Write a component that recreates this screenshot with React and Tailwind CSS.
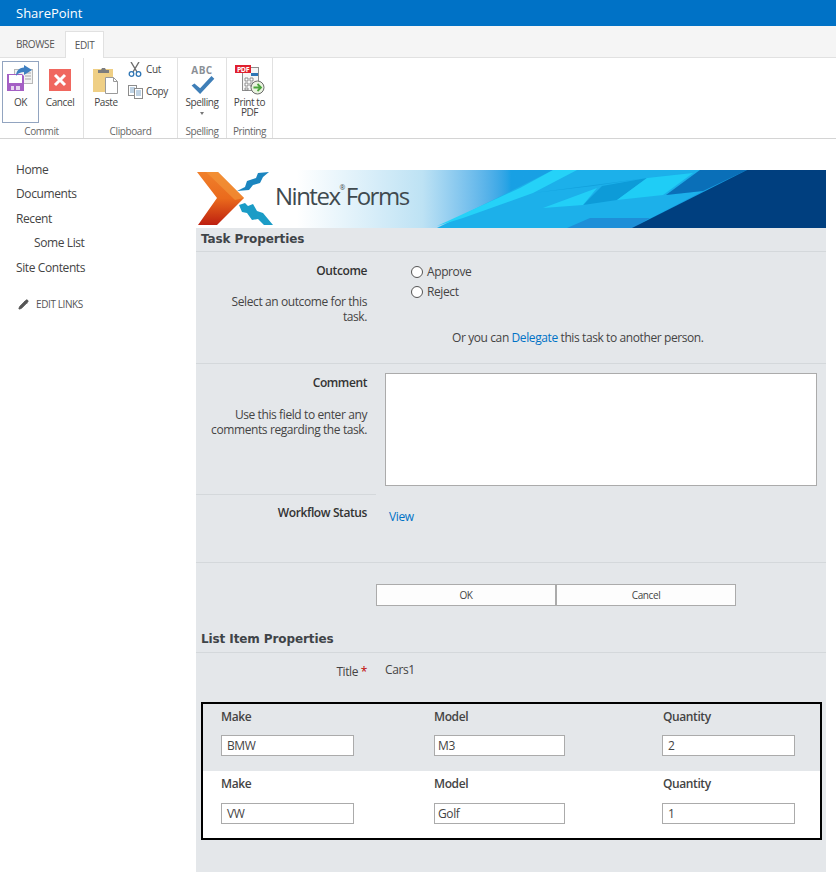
import { Pencil } from "lucide-react";

const font = { fontFamily: '"Open Sans", "Noto Sans", sans-serif' };

const navLinks = [
  { label: "Home", className: "h-[24px] pl-4" },
  { label: "Documents", className: "h-[25px] pl-4" },
  { label: "Recent", className: "h-[24px] pl-4" },
  { label: "Some List", className: "h-[25px] pl-[34px]" },
  { label: "Site Contents", className: "h-[24px] pl-4" },
];

function SaveIcon() {
  return (
    <svg width="28" height="28" viewBox="0 0 28 28">
      <rect x="7.5" y="4.5" width="18" height="14" fill="#f2f2f2" stroke="#b8b8b8" />
      <path d="M18 8h6M18 11h6M18 14h6" stroke="#a5a5a5" />
      <path d="M0 9h15l2 2v15H0z" fill="#a45fc4" />
      <rect x="2" y="10" width="13" height="8" fill="#fff" />
      <rect x="4" y="21" width="9" height="4" fill="#e6d6ee" />
      <rect x="7" y="21" width="2" height="4" fill="#a45fc4" />
      <path d="M17 0l8 5-8 5V7c-3 0-6 1-8 4 0-5 3-8 8-8.5z" fill="#3e7fc1" />
    </svg>
  );
}

function CancelIcon() {
  return (
    <svg width="22" height="22" viewBox="0 0 22 22">
      <rect width="22" height="22" fill="#f0675f" />
      <path d="M6 6l10 10M16 6L6 16" stroke="#fff" strokeWidth="3" />
    </svg>
  );
}

function PasteIcon() {
  return (
    <svg width="26" height="27" viewBox="0 0 26 27">
      <rect x="0" y="2" width="20" height="23" fill="#efcf85" />
      <path d="M5 6V3h3l1-2h3l1 2h3v3z" fill="#7d7d7d" />
      <path d="M12.5 10.5h8l4 4v12h-12z" fill="#fff" stroke="#9a9a9a" />
      <path d="M20.5 10.5v4h4" fill="none" stroke="#9a9a9a" />
    </svg>
  );
}

function CutIcon() {
  return (
    <svg width="14" height="15" viewBox="0 0 14 15">
      <path d="M3 0l6 10M11 0L5 10" stroke="#6d6d6d" strokeWidth="1.4" />
      <circle cx="3.5" cy="12" r="2.3" fill="none" stroke="#2f76b5" strokeWidth="1.3" />
      <circle cx="10.5" cy="12" r="2.3" fill="none" stroke="#2f76b5" strokeWidth="1.3" />
    </svg>
  );
}

function CopyIcon() {
  return (
    <svg width="15" height="14" viewBox="0 0 15 14">
      <rect x="0.5" y="0.5" width="8" height="10" fill="#fff" stroke="#8c8c8c" />
      <path d="M2 3h5M2 5h5M2 7h5" stroke="#7fa6c9" />
      <rect x="6.5" y="3.5" width="8" height="10" fill="#fff" stroke="#8c8c8c" />
      <path d="M8 6h5M8 8h5M8 10h5" stroke="#7fa6c9" />
    </svg>
  );
}

function SpellIcon() {
  return (
    <svg width="28" height="18" viewBox="0 0 28 19">
      <path d="M3 10l3-2 6 5L24 0l3 3-15 16z" fill="#3f7fb8" />
    </svg>
  );
}

function PdfIcon() {
  return (
    <svg width="30" height="30" viewBox="0 0 30 30">
      <rect x="7.5" y="2.5" width="16" height="23" fill="#f6f6f6" stroke="#8d8d8d" />
      <rect x="16" y="8" width="7" height="3" fill="#2f76b5" />
      <path d="M10 13h3v3h-3zM15 13h3v3h-3zM10 18h3v3h-3zM15 18h3v3h-3zM10 23h3v2h-3z" fill="#fff" stroke="#777" strokeWidth="0.8" />
      <rect x="0" y="0" width="16" height="8" fill="#e0202f" />
      <text x="8" y="6.6" textAnchor="middle" fontSize="7" fontWeight="700" fill="#fff">PDF</text>
      <circle cx="22.5" cy="22.5" r="6.5" fill="#e9f3df" stroke="#6b6b6b" />
      <path d="M18.5 22.5h7M22.5 19l3.5 3.5-3.5 3.5" fill="none" stroke="#4aa53c" strokeWidth="1.8" />
    </svg>
  );
}

function Banner() {
  return (
    <div className="relative h-[58px] overflow-hidden bg-gradient-to-r from-white from-[16%] via-[#bde2f4] via-[36%] to-[#18a0e4] to-[50%]">
      <svg className="absolute inset-0" width="630" height="58" viewBox="0 0 630 58">
        <defs>
          <linearGradient id="chev" x1="0" y1="0" x2="0" y2="1">
            <stop offset="0" stopColor="#f0802c" />
            <stop offset="0.5" stopColor="#ea6a1c" />
            <stop offset="1" stopColor="#bd1f10" />
          </linearGradient>
        </defs>
        <path d="M241 58L357 0H504L470 25l37-4-71 37z" fill="#1cb0ea" />
        <path d="M241 56L324 18 357 0H381L337 23 267 48z" fill="#25d2f8" />
        <path d="M337 23L497 2 451 8 397 16z" fill="#12a0dc" />
        <path d="M387 35l19-19 45-8-30 22z" fill="#0d9bd8" />
        <path d="M421 30l30-22 46-5-30 22z" fill="#1fcdf6" />
        <path d="M347 38l54-20-14 17z" fill="#22cff7" />
        <path d="M371 58l23-10h60l-17 10z" fill="#1e8fd8" />
        <path d="M504 0h47l-44 21-37 4z" fill="#0a6fb8" />
        <path d="M436 58L551 0H630V58z" fill="#003f7f" />
        <path d="M1 2h21l26 26-27 27H2l19-27z" fill="url(#chev)" />
        <path d="M10 2h12l26 26-9 2z" fill="#f39a3c" opacity="0.6" />
        <path d="M41 21l8-4 2-6 9-3 2-5 11-1-6 5-3 6-7 2-4 5z" fill="#1b85bf" />
        <path d="M43 35l6-2 3 3 5-2 4 7 6 2 10 12H68l-6-6-6 1-5-7-5-1z" fill="#1b9cc6" />
      </svg>
      <div className="absolute left-[79px] top-[8px] flex items-start text-[#3f4a4f] text-[24px] leading-[36px] tracking-[-1.5px]">
        Nintex<span className="text-[7px] leading-[20px] mr-[2px]">®</span>Forms
      </div>
    </div>
  );
}

function TableRow({ make, model, quantity, className, inputGap }) {
  return (
    <div className={className}>
      <div className="flex pl-[18px] h-[26px] items-center text-[12px] font-semibold text-[#444]">
        <div className="w-[213px]">Make</div>
        <div className="w-[229px]">Model</div>
        <div>Quantity</div>
      </div>
      <div className={`flex pl-[18px] ${inputGap} text-[12px] text-[#444]`}>
        <div className="w-[133px] h-[21px] mr-[80px] bg-white border border-[#ababab] pl-[5px] leading-[20px]">{make}</div>
        <div className="w-[131px] h-[21px] mr-[97px] bg-white border border-[#ababab] pl-[3px] leading-[20px]">{model}</div>
        <div className="w-[133px] h-[21px] bg-white border border-[#ababab] pl-[5px] leading-[20px]">{quantity}</div>
      </div>
    </div>
  );
}

export default function App() {
  return (
    <div className="w-[836px] h-[872px] overflow-hidden bg-white text-[#444] tracking-[-0.4px]" style={font}>
      <div className="h-[26px] bg-[#0072c6] pl-4 text-white text-[13px] leading-[26px] tracking-normal">SharePoint</div>

      <div className="h-[32px] bg-[#f5f5f5] border-b border-[#e1e1e1] flex items-end text-[10px] text-[#555]">
        <div className="pl-4 pr-3 h-[26px] leading-[26px] w-[65px]">BROWSE</div>
        <div className="w-[39px] h-[27px] -mb-px bg-white border border-b-0 border-[#e1e1e1] text-center leading-[26px]">EDIT</div>
      </div>

      <div className="h-[81px] border-b border-[#d4d4d4] flex text-[10px] text-[#444]">
        <div className="w-[84px] border-r border-[#e1e1e1] flex flex-col">
          <div className="flex pt-[3px] pl-[2px] flex-1">
            <div className="w-[37px] h-[62px] border border-[#92a4c0] flex flex-col items-center pt-[3px]">
              <SaveIcon />
              <div className="mt-[3px] leading-[12px]">OK</div>
            </div>
            <div className="w-[42px] flex flex-col items-center pt-[8px]">
              <CancelIcon />
              <div className="mt-[5px] leading-[12px]">Cancel</div>
            </div>
          </div>
          <div className="h-[15px] text-center leading-[16px] text-[#666]">Commit</div>
        </div>

        <div className="w-[94px] border-r border-[#e1e1e1] flex flex-col">
          <div className="flex flex-1">
            <div className="w-[44px] flex flex-col items-center pt-[9px]">
              <PasteIcon />
              <div className="mt-[2px] leading-[12px]">Paste</div>
            </div>
            <div className="flex flex-col pt-[4px] gap-[7px]">
              <div className="flex items-center gap-[4px] h-[15px]"><CutIcon />Cut</div>
              <div className="flex items-center gap-[3px] h-[15px]"><CopyIcon />Copy</div>
            </div>
          </div>
          <div className="h-[15px] text-center leading-[16px] text-[#666]">Clipboard</div>
        </div>

        <div className="w-[49px] border-r border-[#e1e1e1] flex flex-col">
          <div className="flex flex-col items-center flex-1 pt-[7px]">
            <div className="text-[10px] leading-[11px] font-bold text-[#8a8f96] tracking-[0.5px]">ABC</div>
            <SpellIcon />
            <div className="mt-[2px] leading-[12px]">Spelling</div>
            <div className="mt-[4px] w-0 h-0 border-x-[2px] border-t-[3px] border-x-transparent border-t-[#777]" />
          </div>
          <div className="h-[15px] text-center leading-[16px] text-[#666]">Spelling</div>
        </div>

        <div className="w-[46px] border-r border-[#e1e1e1] flex flex-col">
          <div className="flex flex-col items-center flex-1 pt-[7px]">
            <PdfIcon />
            <div className="mt-[2px] leading-[10px] text-center">Print to<br />PDF</div>
          </div>
          <div className="h-[15px] text-center leading-[16px] text-[#666]">Printing</div>
        </div>
      </div>

      <div className="flex">
        <div className="w-[196px] pt-[19px] text-[12px]">
          {navLinks.map((link) => (
            <div key={link.label} className={`${link.className} leading-[24px]`}>{link.label}</div>
          ))}
          <div className="flex items-center pl-[18px] mt-[12px] h-[24px] text-[10px] text-[#555]">
            <Pencil size={11} className="mr-[7px] fill-[#555]" />
            EDIT LINKS
          </div>
        </div>

        <div className="w-[630px] mt-[31px] h-[702px] bg-[#e4e7ea] text-[12px]">
          <Banner />

          <div className="h-[24px] border-b border-[#d4d8db] pl-[5px] text-[12px] leading-[23px] font-bold text-[#3f4448] tracking-[-0.1px]" style={{ fontFamily: '"DejaVu Sans", sans-serif' }}>Task Properties</div>

          <div className="h-[112px] border-b border-[#d4d8db] flex">
            <div className="w-[171px] text-right pt-[11px]">
              <div className="font-semibold leading-[16px] text-[#333]">Outcome</div>
              <div className="mt-[15px] leading-[15px] pl-[30px]">Select an outcome for this task.</div>
            </div>
            <div className="flex-1">
              <div className="pl-[44px] pt-[10px]">
                <div className="flex items-center h-[20px]">
                  <span className="w-[12px] h-[12px] rounded-full border border-[#555] bg-white mr-[4px]" />
                  Approve
                </div>
                <div className="flex items-center h-[20px]">
                  <span className="w-[12px] h-[12px] rounded-full border border-[#555] bg-white mr-[4px]" />
                  Reject
                </div>
              </div>
              <div className="pl-[85px] mt-[28px] leading-[16px]">
                Or you can <span className="text-[#0072c6]">Delegate</span> this task to another person.
              </div>
            </div>
          </div>

          <div className="h-[131px] flex">
            <div className="w-[180px] h-[131px] border-b border-[#d4d8db]">
              <div className="w-[171px] text-right pt-[11px]">
                <div className="font-semibold leading-[16px] text-[#333]">Comment</div>
                <div className="mt-[16px] leading-[15px] pl-[10px]">Use this field to enter any comments regarding the task.</div>
              </div>
            </div>
            <div className="ml-[9px] mt-[9px] w-[432px] h-[113px] bg-white border border-[#ababab]" />
          </div>

          <div className="h-[68px] border-b border-[#d4d8db] flex">
            <div className="w-[171px] text-right pt-[10px] font-semibold leading-[16px] text-[#333]">Workflow Status</div>
            <div className="pl-[22px] pt-[14px] leading-[16px] text-[#0072c6]">View</div>
          </div>

          <div className="pl-[180px] pt-[21px] flex text-[10px]">
            <div className="w-[180px] h-[22px] bg-[#fdfdfd] border border-[#ababab] text-center leading-[21px]">OK</div>
            <div className="w-[180px] h-[22px] bg-[#fdfdfd] border border-[#ababab] text-center leading-[21px]">Cancel</div>
          </div>

          <div className="h-[46px] mt-[1px] pt-[24px] border-b border-[#d4d8db] pl-[5px] text-[12px] leading-[17px] font-bold text-[#3f4448] tracking-[-0.1px]" style={{ fontFamily: '"DejaVu Sans", sans-serif' }}>List Item Properties</div>

          <div className="h-[49px] flex pt-[11px]">
            <div className="w-[171px] text-right leading-[16px]">Title <span className="text-[#bf0000]">*</span></div>
            <div className="pl-[18px] leading-[16px] -mt-[2px]">Cars1</div>
          </div>

          <div className="ml-[5px] w-[621px] h-[138px] border-2 border-black">
            <TableRow make="BMW" model="M3" quantity="2" className="h-[67px]" inputGap="pt-[5px]" />
            <TableRow make="VW" model="Golf" quantity="1" className="h-[67px] bg-white" inputGap="pt-[6px]" />
          </div>
        </div>
      </div>
    </div>
  );
}
